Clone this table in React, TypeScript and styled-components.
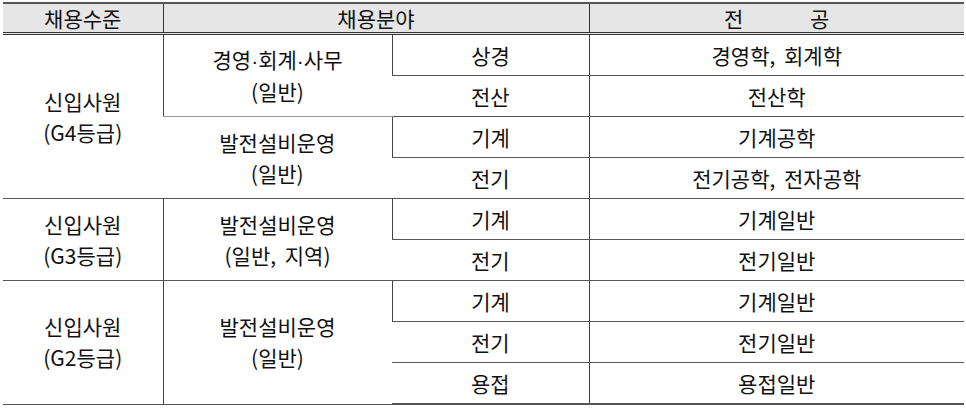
import * as React from 'react'
import styled, { createGlobalStyle } from 'styled-components'

const GlobalStyle = createGlobalStyle`
  body {
    margin: 0;
    background: #fff;
    font-family: 'Noto Sans CJK KR', 'Noto Sans', sans-serif;
    color: #111;
  }
`

const StyledWrap = styled.div`
  padding: 2px 2px 0 3px;
`

const StyledTable = styled.table`
  width: 961px;
  border-collapse: collapse;
  table-layout: fixed;
  font-size: 21px;
  line-height: 31px;
`

const StyledHead = styled.th`
  height: 28px;
  padding: 0;
  background: #e6e6e6;
  font-weight: 400;
  line-height: 26px;
  text-align: center;
  border-top: 2px solid #555;
  border-bottom: 3px double #333;
  border-left: 1px solid #333;
  &:first-child {
    border-left: none;
  }
`

const StyledCell = styled.td<{ $light?: boolean }>`
  height: 40px;
  padding: 0;
  text-align: center;
  vertical-align: middle;
  border-bottom: 1px solid ${(p) => (p.$light ? '#999' : '#555')};
  border-left: 1px solid #444;
  &:first-child {
    border-left: none;
  }
`

const StyledGroupEnd = styled.tr`
  td {
    border-bottom: 1px solid #555;
  }
`

const StyledLast = styled.tr`
  td {
    border-bottom: 2px solid #555;
  }
`

const Spaced = styled.span`
  word-spacing: 62px;
`

const Dot = styled.span`
  font-family: 'Liberation Sans', sans-serif;
`

const Comma = styled.span`
  margin-right: 4px;
`

const App: React.FC = () => (
  <>
    <GlobalStyle />
    <StyledWrap>
      <StyledTable>
        <colgroup>
          <col style={{ width: 160 }} />
          <col style={{ width: 229 }} />
          <col style={{ width: 197 }} />
          <col style={{ width: 375 }} />
        </colgroup>
        <thead>
          <tr>
            <StyledHead>채용수준</StyledHead>
            <StyledHead colSpan={2}>채용분야</StyledHead>
            <StyledHead><Spaced>전 공</Spaced></StyledHead>
          </tr>
        </thead>
        <tbody>
          <tr>
            <StyledCell rowSpan={4}>신입사원<br />(G4등급)</StyledCell>
            <StyledCell rowSpan={2} $light>경영<Dot>·</Dot>회계<Dot>·</Dot>사무<br />(일반)</StyledCell>
            <StyledCell>상경</StyledCell>
            <StyledCell>경영학<Comma>,</Comma> 회계학</StyledCell>
          </tr>
          <tr>
            <StyledCell>전산</StyledCell>
            <StyledCell>전산학</StyledCell>
          </tr>
          <tr>
            <StyledCell rowSpan={2}>발전설비운영<br />(일반)</StyledCell>
            <StyledCell>기계</StyledCell>
            <StyledCell>기계공학</StyledCell>
          </tr>
          <StyledGroupEnd>
            <StyledCell>전기</StyledCell>
            <StyledCell>전기공학<Comma>,</Comma> 전자공학</StyledCell>
          </StyledGroupEnd>
          <tr>
            <StyledCell rowSpan={2}>신입사원<br />(G3등급)</StyledCell>
            <StyledCell rowSpan={2}>발전설비운영<br />(일반<Comma>,</Comma> 지역)</StyledCell>
            <StyledCell>기계</StyledCell>
            <StyledCell>기계일반</StyledCell>
          </tr>
          <StyledGroupEnd>
            <StyledCell>전기</StyledCell>
            <StyledCell>전기일반</StyledCell>
          </StyledGroupEnd>
          <tr>
            <StyledCell rowSpan={3}>신입사원<br />(G2등급)</StyledCell>
            <StyledCell rowSpan={3}>발전설비운영<br />(일반)</StyledCell>
            <StyledCell>기계</StyledCell>
            <StyledCell>기계일반</StyledCell>
          </tr>
          <tr>
            <StyledCell>전기</StyledCell>
            <StyledCell>전기일반</StyledCell>
          </tr>
          <StyledLast>
            <StyledCell>용접</StyledCell>
            <StyledCell>용접일반</StyledCell>
          </StyledLast>
        </tbody>
      </StyledTable>
    </StyledWrap>
  </>
)

export default App
